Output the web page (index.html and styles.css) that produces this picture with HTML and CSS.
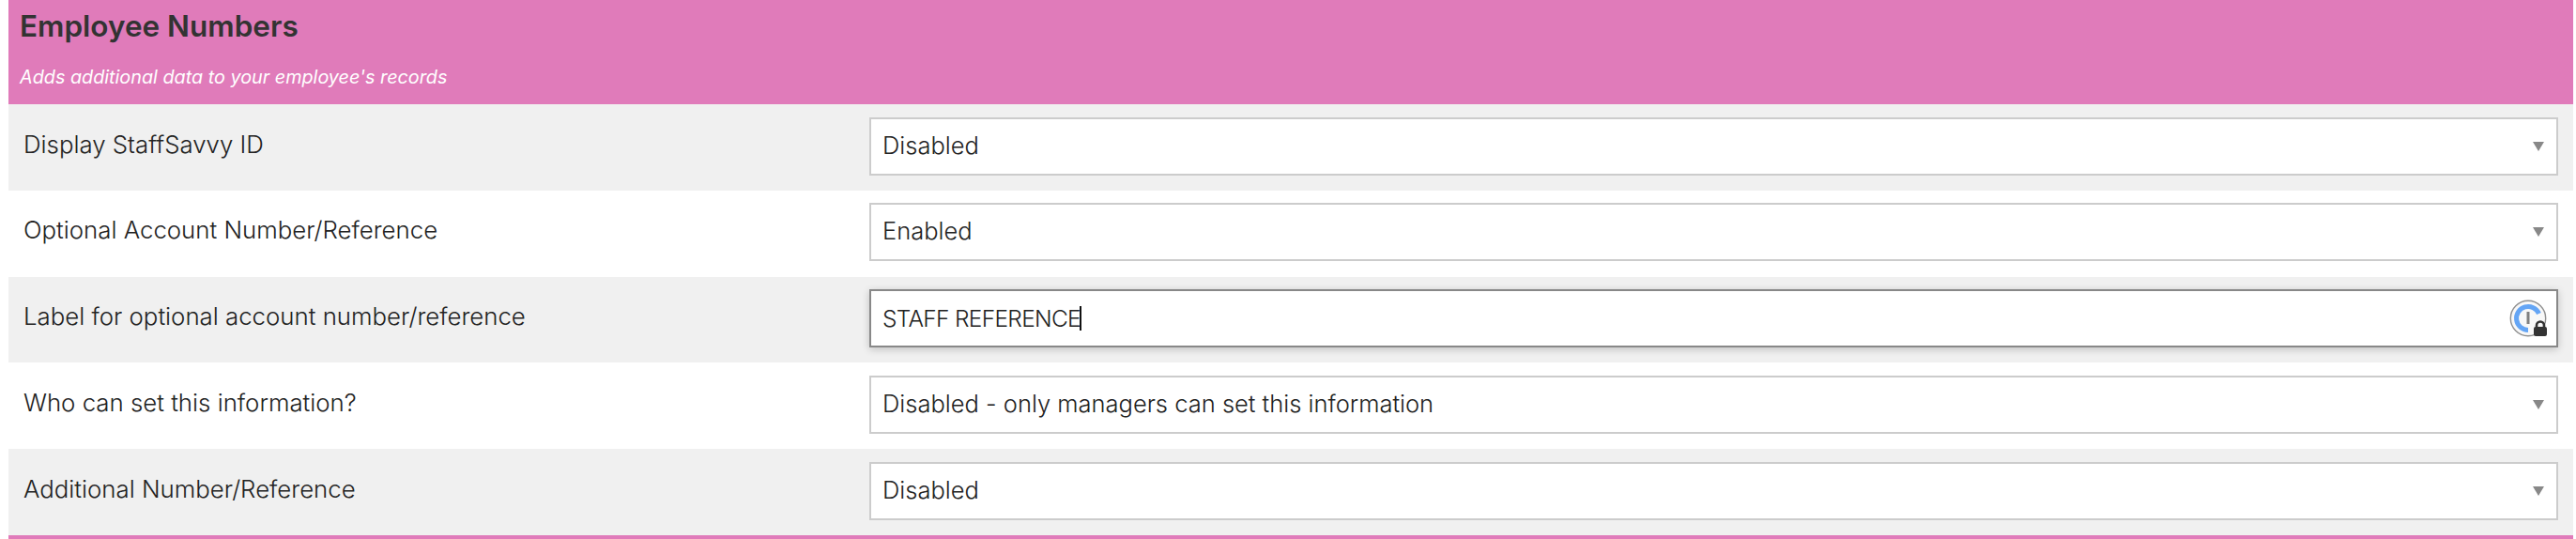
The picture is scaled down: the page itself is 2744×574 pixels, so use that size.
FILE: index.html
```html
<!DOCTYPE html>
<html lang="en">
<head>
  <meta charset="UTF-8" />
  <title>Employee Numbers</title>
  <link rel="stylesheet" href="styles.css">
</head>
<body>
  <div class="panel">
    <header class="panel-head">
      <h2>Employee Numbers</h2>
      <p>Adds additional data to your employee's records</p>
    </header>

    <div class="row">
      <label>Display StaffSavvy ID</label>
      <div class="select-wrap">
        <select><option>Disabled</option></select>
      </div>
    </div>

    <div class="row">
      <label>Optional Account Number/Reference</label>
      <div class="select-wrap">
        <select><option>Enabled</option></select>
      </div>
    </div>

    <div class="row">
      <label>Label for optional account number/reference</label>
      <div class="text-field">
        <span class="value">STAFF REFERENCE</span><span class="caret"></span>
        <!-- password manager icon -->
        <svg class="pw-icon" width="42" height="40" viewBox="0 0 42 40">
          <circle cx="20" cy="20" r="18.7" fill="#f8f8f8" stroke="#8f8f8f" stroke-width="1.4"/>
          <path d="M20 32.5 A12.5 12.5 0 1 1 31.5 15" fill="none" stroke="#64a5f5" stroke-width="5"/>
          <rect x="18.5" y="13" width="3" height="13" fill="#808080"/>
          <path d="M29 30 v-2.5 a4 4 0 0 1 8 0 v2.5" fill="none" stroke="#333" stroke-width="2.6"/>
          <rect x="26" y="29" width="14" height="10" rx="2" fill="#333"/>
        </svg>
      </div>
    </div>

    <div class="row">
      <label>Who can set this information?</label>
      <div class="select-wrap">
        <select><option>Disabled - only managers can set this information</option></select>
      </div>
    </div>

    <div class="row">
      <label>Additional Number/Reference</label>
      <div class="select-wrap">
        <select><option>Disabled</option></select>
      </div>
    </div>

    <div class="panel-foot"></div>
  </div>
</body>
</html>
```

FILE: styles.css
```css
body {
  margin: 0;
  background: white;
  font-family: 'Inter', sans-serif;
  color: #222;
}

.panel {
  margin: 0 3px 0 9px;
}

.panel-head {
  background: #e07bba;
  height: 111px;
  box-sizing: border-box;
  padding: 9px 0 0 12px;
}

.panel-head h2 {
  margin: 0;
  font-size: 31.5px;
  line-height: 38px;
  font-weight: 600;
  color: #333;
}

.panel-head p {
  margin: 22px 0 0 0;
  font-size: 19.8px;
  line-height: 26px;
  font-style: italic;
  color: white;
}

.row {
  display: flex;
  height: 91.8px;
  box-sizing: border-box;
  padding: 13.5px 16px 0 16px;
}

.row:nth-of-type(odd) {
  background: #f0f0f0;
}

.row label {
  width: 901px;
  font-size: 25.8px;
  line-height: 58px;
  font-weight: 300;
}

.select-wrap, .text-field {
  flex: 1;
  position: relative;
  box-sizing: border-box;
  height: 62px;
  background: white;
}

.select-wrap select {
  appearance: none;
  width: 100%;
  height: 100%;
  padding: 0 12px 3px 12px;
  border: 2px solid #ccc;
  border-radius: 0;
  background: white;
  font-family: inherit;
  font-size: 25.5px;
  font-weight: 300;
  color: #222;
  outline: none;
}

/* arrow for the selects */
.select-wrap::after {
  content: "";
  position: absolute;
  right: 15px;
  top: 26px;
  border-left: 6px solid transparent;
  border-right: 6px solid transparent;
  border-top: 10px solid #888;
}

.text-field {
  display: flex;
  align-items: center;
  padding: 0 12px;
  border: 2px solid #888;
  font-size: 24.5px;
  font-weight: 300;
  letter-spacing: -0.7px;
  box-shadow: 0 2px 8px rgba(0,0,0,0.2);
}

.caret {
  width: 2px;
  height: 26px;
  margin-left: -1px;
  background: #111;
}

.pw-icon {
  position: absolute;
  right: 8px;
  top: 9px;
}

.panel-foot {
  background: #e07bba;
  height: 4px;
}
```
